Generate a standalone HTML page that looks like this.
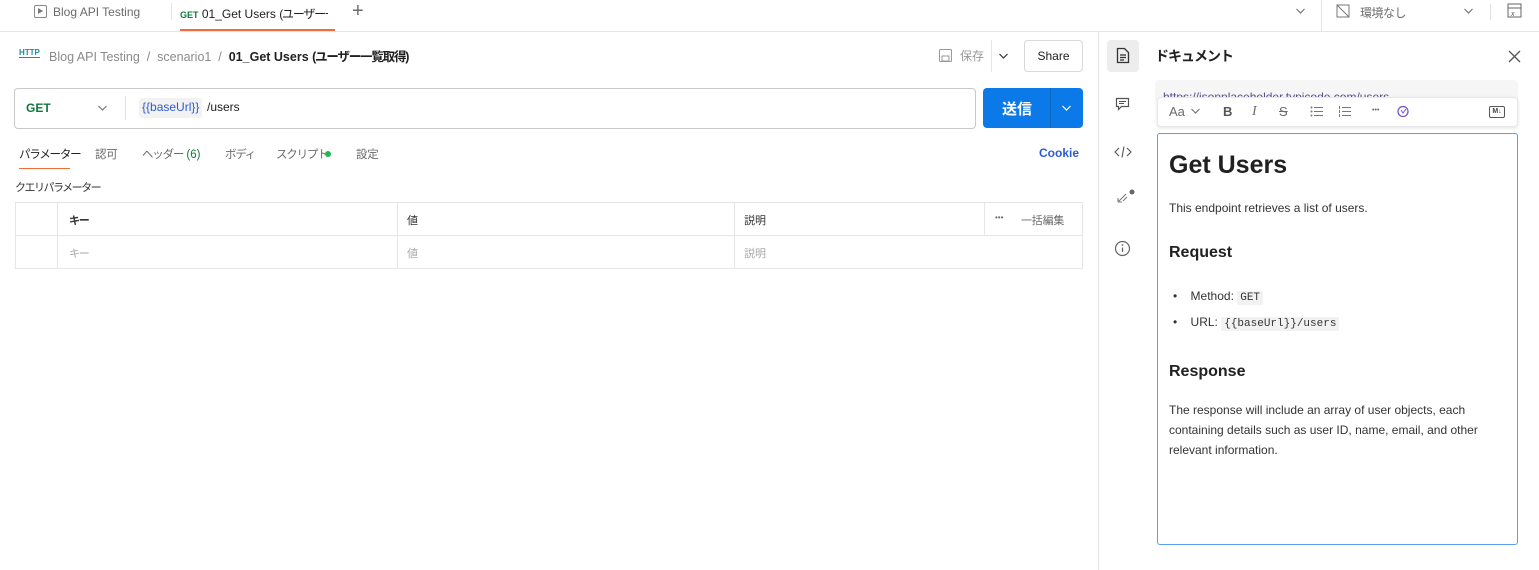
<!DOCTYPE html>
<html><head><meta charset="utf-8"><style>
*{box-sizing:border-box;margin:0;padding:0}
body{width:1539px;height:570px;background:#fff;font-family:"Liberation Sans","Noto Sans CJK JP",sans-serif;color:#212121;position:relative;overflow:hidden;font-size:12px}
.a{position:absolute;white-space:nowrap}
.g{color:#6b6b6b}
.j{letter-spacing:-1.2px}
</style></head><body>
<!-- top bar -->
<div class="a" style="left:0;top:31px;width:1539px;height:1px;background:#e6e6e6"></div>
<div class="a" style="left:34px;top:5px;width:13px;height:13px;border:1px solid #888;border-radius:2px"></div>
<div class="a" style="left:38px;top:8px;width:0;height:0;border-left:5px solid #777;border-top:3.5px solid transparent;border-bottom:3.5px solid transparent"></div>
<div class="a g" style="left:53px;top:5px;font-size:12px">Blog API Testing</div>
<div class="a" style="left:171px;top:3px;width:1px;height:17px;background:#e6e6e6"></div>
<div class="a" style="left:180px;top:5px;font-size:12px;width:148px;overflow:hidden"><span style="color:#0f7a3d;font-size:9px;font-weight:bold">GET</span> 01_Get Users <span class="j">(ユーザー一覧</span></div>
<div class="a" style="left:180px;top:29px;width:155px;height:2px;background:#f26b3a"></div>
<div class="a g" style="left:352px;top:0px;font-size:20px;font-weight:300">+</div>
<svg class="a" style="left:1295px;top:7px" width="11" height="8"><path d="M1.5 2l4 4 4-4" fill="none" stroke="#777" stroke-width="1.2"/></svg>
<div class="a" style="left:1321px;top:0;width:1px;height:31px;background:#e6e6e6"></div>
<svg class="a" style="left:1336px;top:4px" width="14" height="14"><rect x="1" y="1" width="12" height="12" fill="none" stroke="#777"/><line x1="1" y1="1" x2="13" y2="13" stroke="#777"/></svg>
<div class="a g" style="left:1360px;top:4px;font-size:12px;letter-spacing:-.5px">環境なし</div>
<svg class="a" style="left:1463px;top:7px" width="11" height="8"><path d="M1.5 2l4 4 4-4" fill="none" stroke="#777" stroke-width="1.2"/></svg>
<div class="a" style="left:1490px;top:4px;width:1px;height:16px;background:#e0e0e0"></div>
<svg class="a" style="left:1507px;top:3px" width="15" height="15"><rect x="1" y="1" width="13" height="13" fill="none" stroke="#666"/><line x1="1" y1="5" x2="14" y2="5" stroke="#666"/><text x="4" y="13" font-size="7" fill="#555" font-style="italic">x</text></svg>

<!-- breadcrumb -->
<div class="a" style="left:19px;top:48px;font-size:8px;font-weight:bold;color:#1e8aa3;border-bottom:1px solid #1e8aa3">HTTP</div>
<div class="a" style="left:49px;top:46px;font-size:12.5px;color:#8a8a8a">Blog API Testing &nbsp;/&nbsp; scenario1 &nbsp;/&nbsp; <span style="color:#212121;font-weight:bold">01_Get Users <span style="letter-spacing:-1.2px">(ユーザー一覧取得)</span></span></div>
<svg class="a" style="left:938px;top:48px" width="15" height="15"><rect x="1.5" y="1.5" width="12" height="12" rx="1" fill="none" stroke="#999"/><rect x="4" y="8" width="7" height="5" fill="none" stroke="#999"/></svg>
<div class="a" style="left:960px;top:47px;font-size:12px;color:#999">保存</div>
<div class="a" style="left:991px;top:40px;width:1px;height:32px;background:#e6e6e6"></div>
<svg class="a" style="left:998px;top:52px" width="11" height="8"><path d="M1.5 2l4 4 4-4" fill="none" stroke="#333" stroke-width="1.2"/></svg>
<div class="a" style="left:1024px;top:40px;width:59px;height:32px;border:1px solid #d9d9d9;border-radius:4px;text-align:center;line-height:30px;font-size:12px">Share</div>

<!-- url bar -->
<div class="a" style="left:14px;top:88px;width:962px;height:41px;border:1px solid #c8c8c8;border-radius:4px"></div>
<div class="a" style="left:26px;top:101px;font-size:12px;font-weight:bold;color:#0f7a3d">GET</div>
<svg class="a" style="left:97px;top:104px" width="11" height="8"><path d="M1.5 2l4 4 4-4" fill="none" stroke="#777" stroke-width="1.2"/></svg>
<div class="a" style="left:125px;top:96px;width:1px;height:24px;background:#e0e0e0"></div>
<div class="a" style="left:139px;top:98px;height:20px;padding:2px 3px;background:#f2f2f2;border-radius:3px;color:#2d5bd3;font-size:12px">{{baseUrl}}</div>
<div class="a" style="left:207px;top:100px;font-size:12px">/users</div>
<div class="a" style="left:983px;top:88px;width:100px;height:40px;background:#0b7ae8;border-radius:4px"></div>
<div class="a" style="left:1050px;top:88px;width:1px;height:40px;background:#0868c4"></div>
<div class="a" style="left:1002px;top:98px;font-size:15px;font-weight:bold;color:#fff">送信</div>
<svg class="a" style="left:1061px;top:104px" width="11" height="8"><path d="M1.5 2l4 4 4-4" fill="none" stroke="#fff" stroke-width="1.2"/></svg>

<!-- tabs -->
<div class="a j" style="left:19px;top:146px;font-size:11.5px">パラメーター</div>
<div class="a" style="left:19px;top:168px;width:51px;height:1px;background:#f26b3a"></div>
<div class="a g" style="left:95px;top:146px;font-size:11.5px;letter-spacing:-.3px">認可</div>
<div class="a g" style="left:142px;top:146px;font-size:11.5px"><span class="j">ヘッダー</span> <span style="color:#0f7a3d">(6)</span></div>
<div class="a g j" style="left:225px;top:146px;font-size:11.5px">ボディ</div>
<div class="a g j" style="left:276px;top:146px;font-size:11.5px">スクリプト</div>
<div class="a" style="left:325px;top:151px;width:6px;height:6px;border-radius:50%;background:#1db954"></div>
<div class="a g" style="left:356px;top:146px;font-size:11.5px;letter-spacing:-.3px">設定</div>
<div class="a" style="left:1039px;top:146px;font-size:12px;font-weight:bold;color:#2d5bd3">Cookie</div>
<div class="a" style="left:15px;top:179px;font-size:11px;color:#333;letter-spacing:-1.5px">クエリパラメーター</div>

<!-- table -->
<div class="a" style="left:15px;top:202px;width:1068px;height:67px;border:1px solid #e6e6e6"></div>
<div class="a" style="left:15px;top:235px;width:1068px;height:1px;background:#e6e6e6"></div>
<div class="a" style="left:57px;top:202px;width:1px;height:67px;background:#e6e6e6"></div>
<div class="a" style="left:397px;top:202px;width:1px;height:67px;background:#e6e6e6"></div>
<div class="a" style="left:734px;top:202px;width:1px;height:67px;background:#e6e6e6"></div>
<div class="a" style="left:984px;top:202px;width:1px;height:34px;background:#e6e6e6"></div>
<div class="a j" style="left:69px;top:212px;font-size:11px;font-weight:bold;color:#333">キー</div>
<div class="a" style="left:407px;top:212px;font-size:11px;color:#333">値</div>
<div class="a" style="left:744px;top:212px;font-size:11px;color:#333">説明</div>
<div class="a g" style="left:995px;top:213px;font-size:8px">•••</div>
<div class="a g" style="left:1021px;top:212px;font-size:11px;letter-spacing:-.2px">一括編集</div>
<div class="a j" style="left:69px;top:245px;font-size:11px;color:#aaa">キー</div>
<div class="a" style="left:407px;top:245px;font-size:11px;color:#aaa">値</div>
<div class="a" style="left:744px;top:245px;font-size:11px;color:#aaa">説明</div>

<!-- right panel -->
<div class="a" style="left:1098px;top:32px;width:1px;height:538px;background:#e6e6e6"></div>
<div class="a" style="left:1107px;top:40px;width:32px;height:32px;background:#ededed;border-radius:4px"></div>
<svg class="a" style="left:1116px;top:47px" width="14" height="17"><path d="M1.5 1.5h7l4 4v10h-11z" fill="none" stroke="#333" stroke-width="1.3"/><path d="M4 8h6M4 10.5h6M4 13h4" stroke="#333" stroke-width="1.2"/></svg>
<svg class="a" style="left:1115px;top:96px" width="16" height="16"><path d="M1.5 2.5h12v8h-7l-3 3v-3h-2z" fill="none" stroke="#555" stroke-width="1.2"/><path d="M4 5.5h7M4 7.5h5" stroke="#555"/></svg>
<svg class="a" style="left:1114px;top:145px" width="18" height="14"><path d="M5 3l-4 4 4 4M13 3l4 4-4 4M10 1.5l-2 11" fill="none" stroke="#555" stroke-width="1.1"/></svg>
<svg class="a" style="left:1115px;top:188px" width="22" height="20"><path d="M3 14l8-8M3 14v-4M3 14h4M12 9l-4 4" stroke="#777" fill="none"/><circle cx="17" cy="4" r="2.5" fill="#666"/></svg>
<svg class="a" style="left:1114px;top:240px" width="17" height="17"><circle cx="8.5" cy="8.5" r="7" fill="none" stroke="#666" stroke-width="1.2"/><path d="M8.5 7.5v4.5" stroke="#666" stroke-width="1.3"/><circle cx="8.5" cy="5" r="0.9" fill="#666"/></svg>
<div class="a" style="left:1155px;top:46px;font-size:14px;font-weight:bold;letter-spacing:-1px">ドキュメント</div>
<svg class="a" style="left:1508px;top:50px" width="13" height="13"><path d="M1 1l11 11M12 1L1 12" stroke="#555" stroke-width="1.3"/></svg>

<div class="a" style="left:1155px;top:80px;width:363px;height:22px;background:#f6f6f6;border-radius:4px;overflow:hidden"><div style="padding:10px 0 0 8px;font-size:12px;color:#5a4e8c">https://jsonplaceholder.typicode.com/users</div></div>
<div class="a" style="left:1157px;top:97px;width:361px;height:30px;background:#fff;border:1px solid #e8e8e8;border-radius:4px;box-shadow:0 1px 3px rgba(0,0,0,.12)"></div>
<div class="a g" style="left:1169px;top:104px;font-size:13px">Aa</div>
<svg class="a" style="left:1190px;top:107px" width="11" height="8"><path d="M1.5 2l4 4 4-4" fill="none" stroke="#777" stroke-width="1.2"/></svg>
<div class="a" style="left:1223px;top:104px;font-size:13px;font-weight:bold;color:#555">B</div>
<div class="a g" style="left:1252px;top:104px;font-size:14px;font-style:italic;font-family:'Liberation Serif',serif">I</div>
<div class="a g" style="left:1279px;top:104px;font-size:13px;text-decoration:line-through">S</div>
<svg class="a" style="left:1310px;top:105px" width="13" height="13"><path d="M4 2.5h9M4 6.5h9M4 10.5h9" stroke="#777"/><circle cx="1.5" cy="2.5" r="1" fill="#777"/><circle cx="1.5" cy="6.5" r="1" fill="#777"/><circle cx="1.5" cy="10.5" r="1" fill="#777"/></svg>
<svg class="a" style="left:1338px;top:105px" width="13" height="13"><path d="M4 2.5h9M4 6.5h9M4 10.5h9M1.5 1v3M1.5 5v3M1.5 9v3" stroke="#777"/></svg>
<div class="a g" style="left:1372px;top:107px;font-size:7px">•••</div>
<svg class="a" style="left:1396px;top:104px" width="14" height="14"><circle cx="7" cy="7.5" r="5" fill="none" stroke="#7a55c9" stroke-width="1.3"/><path d="M5 6l2 3 3-4" stroke="#7a55c9" fill="none"/></svg>
<div class="a" style="left:1489px;top:106px;width:16px;height:12px;border:1px solid #555;border-radius:2px;font-size:7px;font-weight:bold;text-align:center;line-height:10px;color:#444">M↓</div>

<div class="a" style="left:1157px;top:133px;width:361px;height:412px;border:1px solid #5c9ff0;border-radius:3px;padding:0 12px">
<div style="position:absolute;left:11px;top:17px;font-size:25px;font-weight:bold">Get Users</div>
<div style="position:absolute;left:11px;top:67px;font-size:12px;color:#333">This endpoint retrieves a list of users.</div>
<div style="position:absolute;left:11px;top:110px;font-size:16px;font-weight:bold">Request</div>
<div style="position:absolute;left:15px;top:155px;font-size:12px;color:#333">•&nbsp;&nbsp;&nbsp;&nbsp;Method: <span style="font-family:'Liberation Mono',monospace;background:#f2f2f2;padding:1px 3px;font-size:11px">GET</span></div>
<div style="position:absolute;left:15px;top:181px;font-size:12px;color:#333">•&nbsp;&nbsp;&nbsp;&nbsp;URL: <span style="font-family:'Liberation Mono',monospace;background:#f2f2f2;padding:1px 3px;font-size:11px">{{baseUrl}}/users</span></div>
<div style="position:absolute;left:11px;top:229px;font-size:16px;font-weight:bold">Response</div>
<div style="position:absolute;left:11px;top:266px;width:340px;font-size:12px;line-height:20px;color:#333;white-space:normal">The response will include an array of user objects, each containing details such as user ID, name, email, and other relevant information.</div>
</div>
</body></html>
